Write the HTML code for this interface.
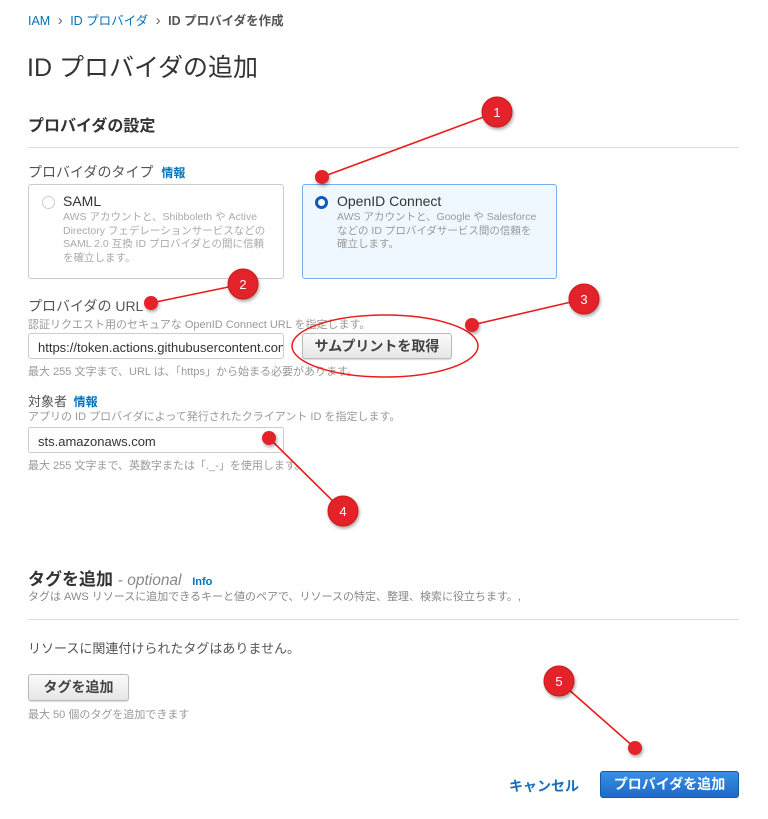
<!DOCTYPE html>
<html><head><meta charset="utf-8"><style>
*{margin:0;padding:0;box-sizing:border-box}
body{width:768px;height:819px;background:#fff;position:relative;overflow:hidden;font-family:"Liberation Sans","Noto Sans CJK JP",sans-serif;color:#444}
.a{position:absolute;white-space:nowrap}
.lnk{color:#0073bb}
.help{font-size:11px;color:#999}
.lbl{font-size:14px;color:#555}
.box{position:absolute;border:1px solid #ccc;border-radius:3px;background:#fff}
.inp{position:absolute;border:1px solid #ccc;border-radius:3px;background:#fff;font-size:13px;color:#333;padding:6px 0 0 9px;overflow:hidden;white-space:nowrap}
.btn{position:absolute;border:1px solid #bbb;border-radius:3px;background:linear-gradient(#fafafa,#e6e6e6);font-size:14px;font-weight:bold;color:#444;text-align:center;box-shadow:0 1px 1px rgba(0,0,0,.15)}
</style></head><body>
<div class="a" style="left:28px;top:10px;font-size:12.5px"><span class="lnk">IAM</span> <span style="color:#666;margin:0 4px;font-size:15px">›</span> <span class="lnk">ID プロバイダ</span> <span style="color:#666;margin:0 4px;font-size:15px">›</span> <span style="color:#555;font-weight:bold">ID プロバイダを作成</span></div>
<div class="a" style="left:27px;top:48px;font-size:25px;color:#333">ID プロバイダの追加</div>
<div class="a" style="left:28px;top:112px;font-size:16px;font-weight:bold;color:#333">プロバイダの設定</div>
<div class="a" style="left:28px;top:147px;width:711px;height:1px;background:#ddd"></div>
<div class="a lbl" style="left:28px;top:162px">プロバイダのタイプ <span class="lnk" style="font-size:12px;font-weight:bold;margin-left:4px">情報</span></div>
<div class="box" style="left:28px;top:184px;width:256px;height:95px"></div>
<div class="a" style="left:42px;top:196px;width:13px;height:13px;border:1px solid #ccc;border-radius:50%"></div>
<div class="a" style="left:63px;top:193px;font-size:14px;color:#333">SAML</div>
<div class="a" style="left:63px;top:211px;font-size:10.5px;line-height:13.5px;color:#aaa">AWS アカウントと、Shibboleth や Active<br>Directory フェデレーションサービスなどの<br>SAML 2.0 互換 ID プロバイダとの間に信頼<br>を確立します。</div>
<div class="box" style="left:302px;top:184px;width:255px;height:95px;background:#f0f8ff;border-color:#7aaee8"></div>
<div class="a" style="left:315px;top:196px;width:13px;height:13px;border:3.5px solid #0a5cb8;border-radius:50%;background:#fff"></div>
<div class="a" style="left:337px;top:193px;font-size:14px;color:#333">OpenID Connect</div>
<div class="a" style="left:337px;top:211px;font-size:10.5px;line-height:13.5px;color:#999">AWS アカウントと、Google や Salesforce<br>などの ID プロバイダサービス間の信頼を<br>確立します。</div>
<div class="a lbl" style="left:28px;top:296px">プロバイダの URL</div>
<div class="a help" style="left:28px;top:316px">認証リクエスト用のセキュアな OpenID Connect URL を指定します。</div>
<div class="inp" style="left:28px;top:333px;width:256px;height:26px">https://token.actions.githubusercontent.con</div>
<div class="btn" style="left:302px;top:333px;width:150px;height:26px;line-height:24px">サムプリントを取得</div>
<div class="a help" style="left:28px;top:363px">最大 255 文字まで、URL は、「https」から始まる必要があります。</div>
<div class="a lbl" style="left:28px;top:391px;font-size:13px">対象者 <span class="lnk" style="font-size:12px;font-weight:bold;margin-left:3px">情報</span></div>
<div class="a help" style="left:28px;top:408px">アプリの ID プロバイダによって発行されたクライアント ID を指定します。</div>
<div class="inp" style="left:28px;top:427px;width:256px;height:26px">sts.amazonaws.com</div>
<div class="a help" style="left:28px;top:457px">最大 255 文字まで、英数字または「._-」を使用します。</div>
<div class="a" style="left:28px;top:565px;font-size:17px;font-weight:bold;color:#333">タグを追加 <span style="font-weight:normal;font-style:italic;color:#888;font-size:15.5px">- optional</span> <span class="lnk" style="font-size:11px;font-weight:bold;margin-left:6px">Info</span></div>
<div class="a help" style="left:28px;top:588px;color:#888">タグは AWS リソースに追加できるキーと値のペアで、リソースの特定、整理、検索に役立ちます。,</div>
<div class="a" style="left:28px;top:619px;width:711px;height:1px;background:#ddd"></div>
<div class="a" style="left:28px;top:638px;font-size:13px;color:#555">リソースに関連付けられたタグはありません。</div>
<div class="btn" style="left:28px;top:674px;width:101px;height:27px;line-height:25px">タグを追加</div>
<div class="a help" style="left:28px;top:706px">最大 50 個のタグを追加できます</div>
<div class="a" style="left:509px;top:776px;font-size:14px;font-weight:bold;color:#1a6fb8">キャンセル</div>
<div class="a" style="left:600px;top:771px;width:139px;height:27px;border:1px solid #145a9e;border-radius:3px;background:linear-gradient(#3a8ee6,#1c6bc6);color:#fff;font-size:14px;font-weight:bold;text-align:center;line-height:25px">プロバイダを追加</div>
<svg class="a" style="left:0;top:0" width="768" height="819">
<defs><filter id="s"><feDropShadow dx="1" dy="2" stdDeviation="1.5" flood-opacity=".35"/></filter></defs>
<g stroke="#e81c1c" stroke-width="1.6">
<line x1="497" y1="112" x2="322" y2="177"/>
<line x1="243" y1="284" x2="151" y2="303"/>
<line x1="584" y1="299" x2="472" y2="325"/>
<line x1="343" y1="511" x2="269" y2="438"/>
<line x1="559" y1="681" x2="635" y2="748"/>
</g>
<ellipse cx="385" cy="346" rx="93" ry="31" fill="none" stroke="#e81c1c" stroke-width="1.5"/>
<g fill="#e3232a" filter="url(#s)">
<circle cx="322" cy="177" r="7"/><circle cx="151" cy="303" r="7"/><circle cx="472" cy="325" r="7"/><circle cx="269" cy="438" r="7"/><circle cx="635" cy="748" r="7"/>
<circle cx="497" cy="112" r="15" stroke="#c81a1a"/><circle cx="243" cy="284" r="15" stroke="#c81a1a"/><circle cx="584" cy="299" r="15" stroke="#c81a1a"/><circle cx="343" cy="511" r="15" stroke="#c81a1a"/><circle cx="559" cy="681" r="15" stroke="#c81a1a"/>
</g>
<g fill="#fff" font-size="13" font-family="Liberation Sans" text-anchor="middle">
<text x="497" y="117">1</text><text x="243" y="289">2</text><text x="584" y="304">3</text><text x="343" y="516">4</text><text x="559" y="686">5</text>
</g>
</svg>
</body></html>
